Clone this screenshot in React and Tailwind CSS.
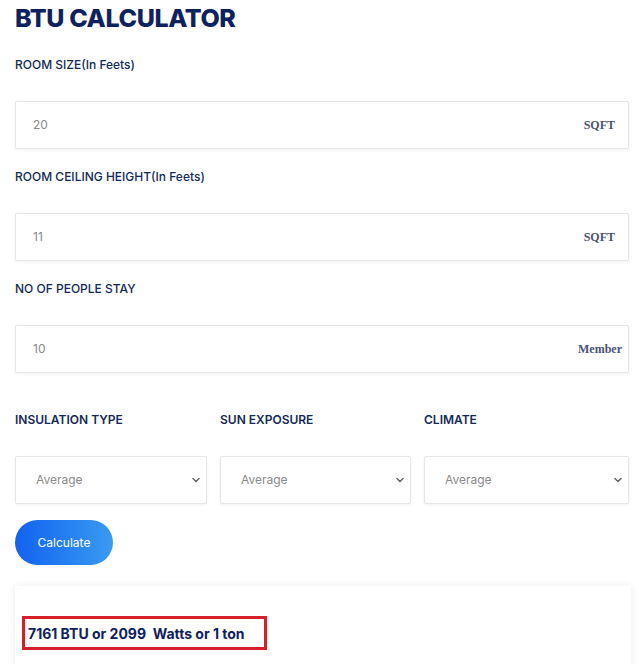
import { ChevronDown } from 'lucide-react'

const font = { fontFamily: 'Inter, "Noto Sans", sans-serif' }

function Field({ label, value, unit, unitPad }) {
  return (
    <div>
      <div className="leading-[16px] mb-[28px] text-[12px] font-medium text-[#142a55]">{label}</div>
      <div className={`h-[48px] flex items-center border border-[#e6e6e6] bg-white shadow-[0_1px_3px_rgba(0,0,0,0.06)] rounded-[2px] pl-[17px] ${unitPad}`}>
        <input
          className="flex-1 text-[12px] text-[#8a8a8a] outline-none bg-transparent"
          defaultValue={value}
        />
        <span className="text-[12px] font-bold text-[#4b5275]" style={{ fontFamily: '"Liberation Serif", serif' }}>{unit}</span>
      </div>
    </div>
  )
}

function Choice({ label }) {
  return (
    <div>
      <div className="leading-[16px] mb-[28px] text-[12px] font-semibold text-[#142a55]">{label}</div>
      <div className="relative">
        <select className="appearance-none w-full h-[48px] border border-[#e6e6e6] bg-white shadow-[0_1px_3px_rgba(0,0,0,0.06)] rounded-[2px] pl-[20px] text-[12px] text-[#8a8a8a] outline-none">
          <option>Average</option>
          <option>Good</option>
          <option>Poor</option>
        </select>
        <ChevronDown className="absolute right-[5px] top-[18px] w-[12px] h-[12px] text-[#666] pointer-events-none" strokeWidth={3} />
      </div>
    </div>
  )
}

export default function App() {
  return (
    <div className="bg-white min-h-[664px] pl-[15px] pr-[10px] overflow-hidden" style={font}>
      <h1 className="text-[25px] leading-[36px] font-extrabold text-[#0f2260] tracking-[-0.4px]">BTU CALCULATOR</h1>
      <div className="mt-[21px] flex flex-col gap-[20px]">
        <Field label="ROOM SIZE(In Feets)" value="20" unit="SQFT" unitPad="pr-[13px]" />
        <Field label="ROOM CEILING HEIGHT(In Feets)" value="11" unit="SQFT" unitPad="pr-[13px]" />
        <Field label="NO OF PEOPLE STAY" value="10" unit="Member" unitPad="pr-[6px]" />
      </div>
      <div className="mt-[39px] grid grid-cols-[192px_191px_1fr] gap-[13px]">
        <Choice label="INSULATION TYPE" />
        <Choice label="SUN EXPOSURE" />
        <Choice label="CLIMATE" />
      </div>
      <button className="mt-[16px] w-[98px] h-[45px] rounded-full bg-gradient-to-r from-[#1461f0] to-[#3b9af2] text-white text-[12px]">
        Calculate
      </button>
      <div className="mt-[21px] mr-[-2px] bg-white shadow-[0_0_8px_rgba(0,0,0,0.08)] pt-[30px] pb-[20px] px-[7px] h-[100px]">
        <div className="w-[245px] h-[34px] border-[3px] border-[#d71f2a] flex items-center pl-[3px]">
          <span className="text-[14px] font-bold text-[#0f2260] whitespace-pre">7161 BTU or 2099  Watts or 1 ton</span>
        </div>
      </div>
    </div>
  )
}
